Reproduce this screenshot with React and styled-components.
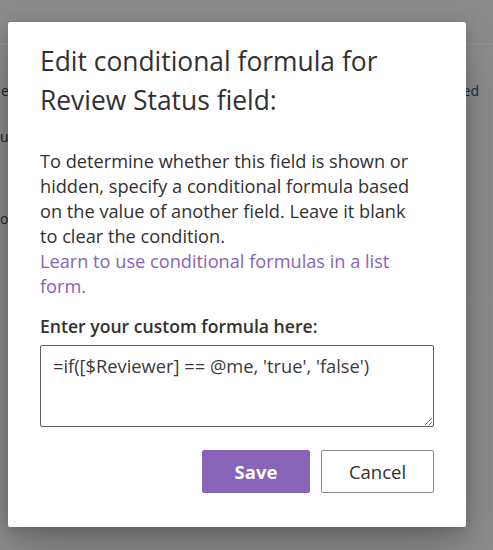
import React, { useState } from "react";
import styled, { createGlobalStyle } from "styled-components";

const GlobalStyle = createGlobalStyle`
  html, body {
    margin: 0;
    padding: 0;
    width: 100%;
    height: 100%;
    overflow: hidden;
  }

  body {
    font-family: "Segoe UI", "Open Sans", sans-serif;
    color: #323130;
  }
`;

const Page = styled.div`
  position: relative;
  width: 493px;
  height: 550px;
  background: #f2f2f2;
  overflow: hidden;
`;

const PageHeader = styled.div`
  height: 43px;
  border-bottom: 1px solid #ffffff;
  background: #eeeeee;
`;

const PageRow = styled.div`
  display: flex;
  justify-content: space-between;
  align-items: center;
  height: ${(props) => props.height}px;
  border-bottom: ${(props) => (props.divider ? "1px solid #fafafa" : "none")};
  font-size: 14px;
  color: #3a3a3a;
`;

const PageCell = styled.span`
  margin-left: ${(props) => props.indent || 0}px;
  margin-right: ${(props) => props.trail || 0}px;
  color: ${(props) => (props.accent ? "#2f4f7a" : "#3a3a3a")};
  white-space: nowrap;
`;

const Overlay = styled.div`
  position: absolute;
  inset: 0;
  background: rgba(0, 0, 0, 0.41);
  display: flex;
  align-items: flex-start;
  padding: 22px 0 0 8px;
`;

const Dialog = styled.div`
  width: 458px;
  height: 505px;
  box-sizing: border-box;
  background: #ffffff;
  border-radius: 2px;
  padding: 20px 32px 0 32px;
  box-shadow: 0 25.6px 57.6px rgba(0, 0, 0, 0.22),
    0 4.8px 14.4px rgba(0, 0, 0, 0.18);
  display: flex;
  flex-direction: column;
`;

const Title = styled.h1`
  margin: 0 0 29px;
  font-size: 26.4px;
  line-height: 39px;
  font-weight: 400;
  color: #323130;
`;

const Description = styled.p`
  margin: 0;
  max-width: 385px;
  font-size: 18.2px;
  line-height: 25px;
  color: #323130;
`;

const HelpLink = styled.a`
  display: block;
  color: #8764b8;
  text-decoration: none;
  cursor: pointer;
`;

const FieldLabel = styled.label`
  display: block;
  margin-top: 16px;
  margin-bottom: 8px;
  font-size: 17.6px;
  line-height: 22px;
  font-weight: 600;
  color: #323130;
`;

const FormulaInput = styled.textarea`
  width: 394px;
  height: 82px;
  box-sizing: border-box;
  margin: 0;
  padding: 8px 12px;
  border: 1px solid #605e5c;
  border-radius: 2px;
  font-family: "Segoe UI", "Open Sans", sans-serif;
  font-size: 18.3px;
  line-height: 24px;
  color: #3b3a39;
  outline: none;
  resize: vertical;
`;

const Actions = styled.div`
  display: flex;
  justify-content: flex-end;
  gap: 11px;
  margin-top: 23px;
`;

const Button = styled.button`
  width: ${(props) => props.width}px;
  height: 43px;
  box-sizing: border-box;
  border-radius: 2px;
  font-family: "Segoe UI", "Open Sans", sans-serif;
  font-size: 18.5px;
  cursor: pointer;
  border: 1px solid ${(props) => (props.primary ? "#8764b8" : "#8a8886")};
  background: ${(props) => (props.primary ? "#8764b8" : "#ffffff")};
  color: ${(props) => (props.primary ? "#ffffff" : "#323130")};
  font-weight: ${(props) => (props.primary ? 700 : 400)};
`;

function App() {
  const [formula, setFormula] = useState(
    "=if([$Reviewer] == @me, 'true', 'false')"
  );

  return (
    <>
      <GlobalStyle />
      <Page>
        <PageHeader />
        <PageRow height={92}>
          <PageCell indent={1}>ep</PageCell>
          <PageCell trail={14} accent>
            Required
          </PageCell>
        </PageRow>
        <PageRow height={0}>
          <PageCell indent={0}>us</PageCell>
        </PageRow>
        <PageRow height={164} divider>
          <PageCell indent={0}>o</PageCell>
        </PageRow>
        <Overlay>
          <Dialog role="dialog">
            <Title>Edit conditional formula for Review Status field:</Title>
            <Description>
              To determine whether this field is shown or hidden, specify a
              conditional formula based on the value of another field. Leave it
              blank to clear the condition.
              <HelpLink>Learn to use conditional formulas in a list form.</HelpLink>
            </Description>
            <FieldLabel htmlFor="formula">Enter your custom formula here:</FieldLabel>
            <FormulaInput
              id="formula"
              value={formula}
              onChange={(e) => setFormula(e.target.value)}
            />
            <Actions>
              <Button primary width={108}>
                Save
              </Button>
              <Button width={113}>Cancel</Button>
            </Actions>
          </Dialog>
        </Overlay>
      </Page>
    </>
  );
}

export default App;
